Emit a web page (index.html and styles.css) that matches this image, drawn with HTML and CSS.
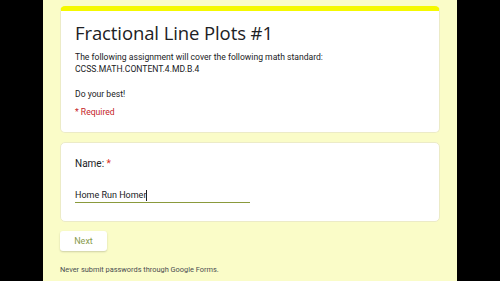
FILE: index.html
```html
<!DOCTYPE html>
<html>
<head>
<meta charset="utf-8">
<link rel="stylesheet" href="styles.css">
</head>
<body>
<div class="stage">
  <div class="page">
    <div class="card header-card">
      <h1 class="title">Fractional Line Plots #1</h1>
      <p class="desc">The following assignment will cover the following math standard:<br>CCSS.MATH.CONTENT.4.MD.B.4</p>
      <p class="desc">Do your best!</p>
      <p class="required">* Required</p>
    </div>
    <div class="card question-card">
      <div class="q-label">Name: <span class="star">*</span></div>
      <div class="answer"><span>Home Run Homer</span><span class="caret"></span></div>
    </div>
    <div class="actions"><button class="next">Next</button></div>
    <div class="footer">Never submit passwords through Google Forms.</div>
  </div>
</div>
</body>
</html>
```
FILE: styles.css
```css
html, body { margin: 0; padding: 0; }
body { background: #000; font-family: Roboto, "Liberation Sans", sans-serif; }
.stage { width: 500px; height: 281px; overflow: hidden; display: flex; justify-content: center; }
.page { width: 414px; background: #fafcc8; padding: 6px 17px 0 17px; box-sizing: border-box; height: 281px; }
.card { background: #fff; border: 1px solid #ecebc7; border-radius: 5px; box-sizing: border-box; }
.header-card { border-top: 5px solid #f5f900; padding: 10px 14px 12px 14px; height: 127px; }
.title { margin: 0; font-family: "Open Sans", Roboto, sans-serif; font-weight: 400; font-size: 18.5px; line-height: 24px; color: #202124; letter-spacing: -0.1px; }
.desc { margin: 6px 0 0 0; font-size: 8.6px; line-height: 12px; color: #202124; }
.desc + .desc { margin-top: 13px; }
.required { margin: 6px 0 0 0; font-size: 8.6px; line-height: 12px; color: #c5221f; }
.question-card { margin-top: 9px; height: 80px; padding: 14px 14px 0 14px; }
.q-label { font-size: 10px; line-height: 14px; color: #202124; }
.star { color: #d93025; }
.answer { margin-top: 17px; width: 175px; border-bottom: 1.5px solid #8a9a3c; font-size: 9px; line-height: 14px; color: #202124; padding-bottom: 0; display: flex; align-items: center; }
.caret { display: inline-block; width: 1px; height: 11px; background: #202124; }
.actions { margin-top: 7px; }
.next { background: #fff; border: none; border-radius: 3px; box-shadow: 0 1px 2px rgba(0,0,0,0.18); width: 47px; height: 20px; font-family: Roboto, sans-serif; font-size: 9px; color: #8a9a4c; font-weight: 400; padding: 0; }
.footer { margin-top: 14px; font-size: 7.4px; color: #4a4d50; }
```
